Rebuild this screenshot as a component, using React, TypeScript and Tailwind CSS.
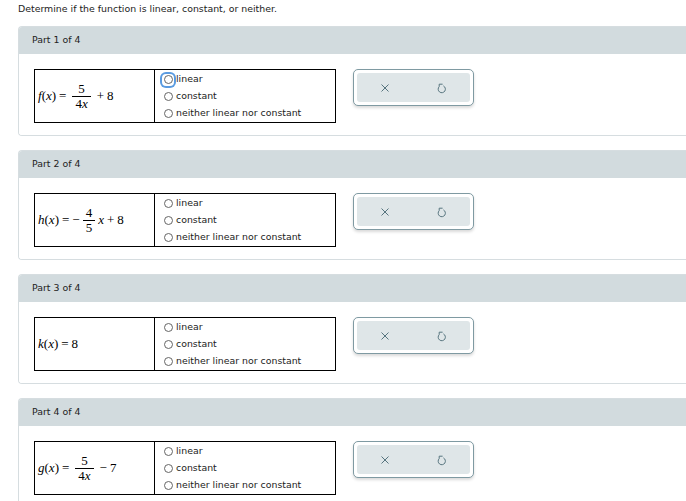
import React from "react";

type Part = {
  label: string;
  math: React.ReactNode;
  focused?: boolean;
};

const options = ["linear", "constant", "neither linear nor constant"];

function Frac({ num, den }: { num: React.ReactNode; den: React.ReactNode }) {
  return (
    <span className="inline-flex flex-col items-center align-middle mx-[3px]">
      <span className="leading-[14px] px-[3px]">{num}</span>
      <span className="block h-px w-full bg-black" />
      <span className="leading-[14px] px-[3px]">{den}</span>
    </span>
  );
}

const I = ({ children }: { children: React.ReactNode }) => (
  <span className="italic">{children}</span>
);

const Op = ({ children }: { children: React.ReactNode }) => (
  <span className="mx-[3px]">{children}</span>
);

const parts: Part[] = [
  {
    label: "Part 1 of 4",
    focused: true,
    math: (
      <>
        <I>f</I>(<I>x</I>)<Op>=</Op>
        <Frac num="5" den={<>4<I>x</I></>} />
        <Op>+</Op>8
      </>
    ),
  },
  {
    label: "Part 2 of 4",
    math: (
      <>
        <I>h</I> (<I>x</I>)<Op>=</Op>−
        <Frac num="4" den="5" />
        <I>x</I>
        <Op>+</Op>8
      </>
    ),
  },
  {
    label: "Part 3 of 4",
    math: (
      <>
        <I>k</I> (<I>x</I>)<Op>=</Op>8
      </>
    ),
  },
  {
    label: "Part 4 of 4",
    math: (
      <>
        <I>g</I> (<I>x</I>)<Op>=</Op>
        <Frac num="5" den={<>4<I>x</I></>} />
        <Op>−</Op>7
      </>
    ),
  },
];

function Radio({ focused }: { focused?: boolean }) {
  return (
    <span
      className={
        "inline-flex items-center justify-center w-[12px] h-[12px] rounded-[4px] " +
        (focused ? "ring-2 ring-[#5b9be0]" : "")
      }
    >
      <span className="w-[9px] h-[9px] rounded-full border border-[#666] bg-white" />
    </span>
  );
}

function ActionButtons() {
  return (
    <div className="ml-[17px] w-[121px] h-[37px] border border-[#7f9aa2] rounded-[5px] p-[3px] bg-white shadow-[0_2px_3px_rgba(0,0,0,0.15)]">
      <div className="h-full bg-[#dfe6e8] rounded-[3px] flex">
        <div className="flex-1 flex items-center justify-center">
          <svg width="10" height="10" viewBox="0 0 10 10">
            <path d="M1.5 1.5 L8.5 8.5 M8.5 1.5 L1.5 8.5" stroke="#56747e" strokeWidth="1" />
          </svg>
        </div>
        <div className="flex-1 flex items-center justify-center">
          <svg width="11" height="12" viewBox="0 0 11 12">
            <path
              d="M3.2 4.6 A3.6 3.6 0 1 0 7.4 3.9"
              fill="none"
              stroke="#56747e"
              strokeWidth="1"
            />
            <path d="M6.6 2.2 H3.2 V4.6" fill="none" stroke="#56747e" strokeWidth="1" />
          </svg>
        </div>
      </div>
    </div>
  );
}

function PartCard({ part }: { part: Part }) {
  return (
    <div className="ml-[18px] mb-[14px] border border-r-0 border-[#d6dde0] rounded-l-[4px] overflow-hidden">
      <div className="h-[27px] bg-[#d2dbde] flex items-center pl-[13px] text-[9.4px] text-[#222]">
        {part.label}
      </div>
      <div className="flex items-start pl-[15px] pt-[15px] pb-[12px] bg-white">
        <div className="w-[302px] h-[54px] border border-black flex">
          <div className="w-[120px] border-r border-black flex items-center pl-[3px] text-[13px] text-black [font-family:Liberation_Serif,serif] whitespace-nowrap">
            {part.math}
          </div>
          <div className="flex-1 flex flex-col pt-[1px] pl-[7px]">
            {options.map((o, i) => (
              <div key={o} className="h-[17px] flex items-center text-[9.4px] text-[#222]">
                <Radio focused={part.focused && i === 0} />
                <span className="ml-[2px]">{o}</span>
              </div>
            ))}
          </div>
        </div>
        <ActionButtons />
      </div>
    </div>
  );
}

export default function App() {
  return (
    <div className="w-[686px] h-[501px] overflow-hidden bg-white [font-family:DejaVu_Sans,Verdana,sans-serif]">
      <div className="pl-[18px] pt-[2px] h-[26px] text-[9.4px] text-[#222] leading-[14px]">
        Determine if the function is linear, constant, or neither.
      </div>
      {parts.map((p) => (
        <PartCard key={p.label} part={p} />
      ))}
    </div>
  );
}
